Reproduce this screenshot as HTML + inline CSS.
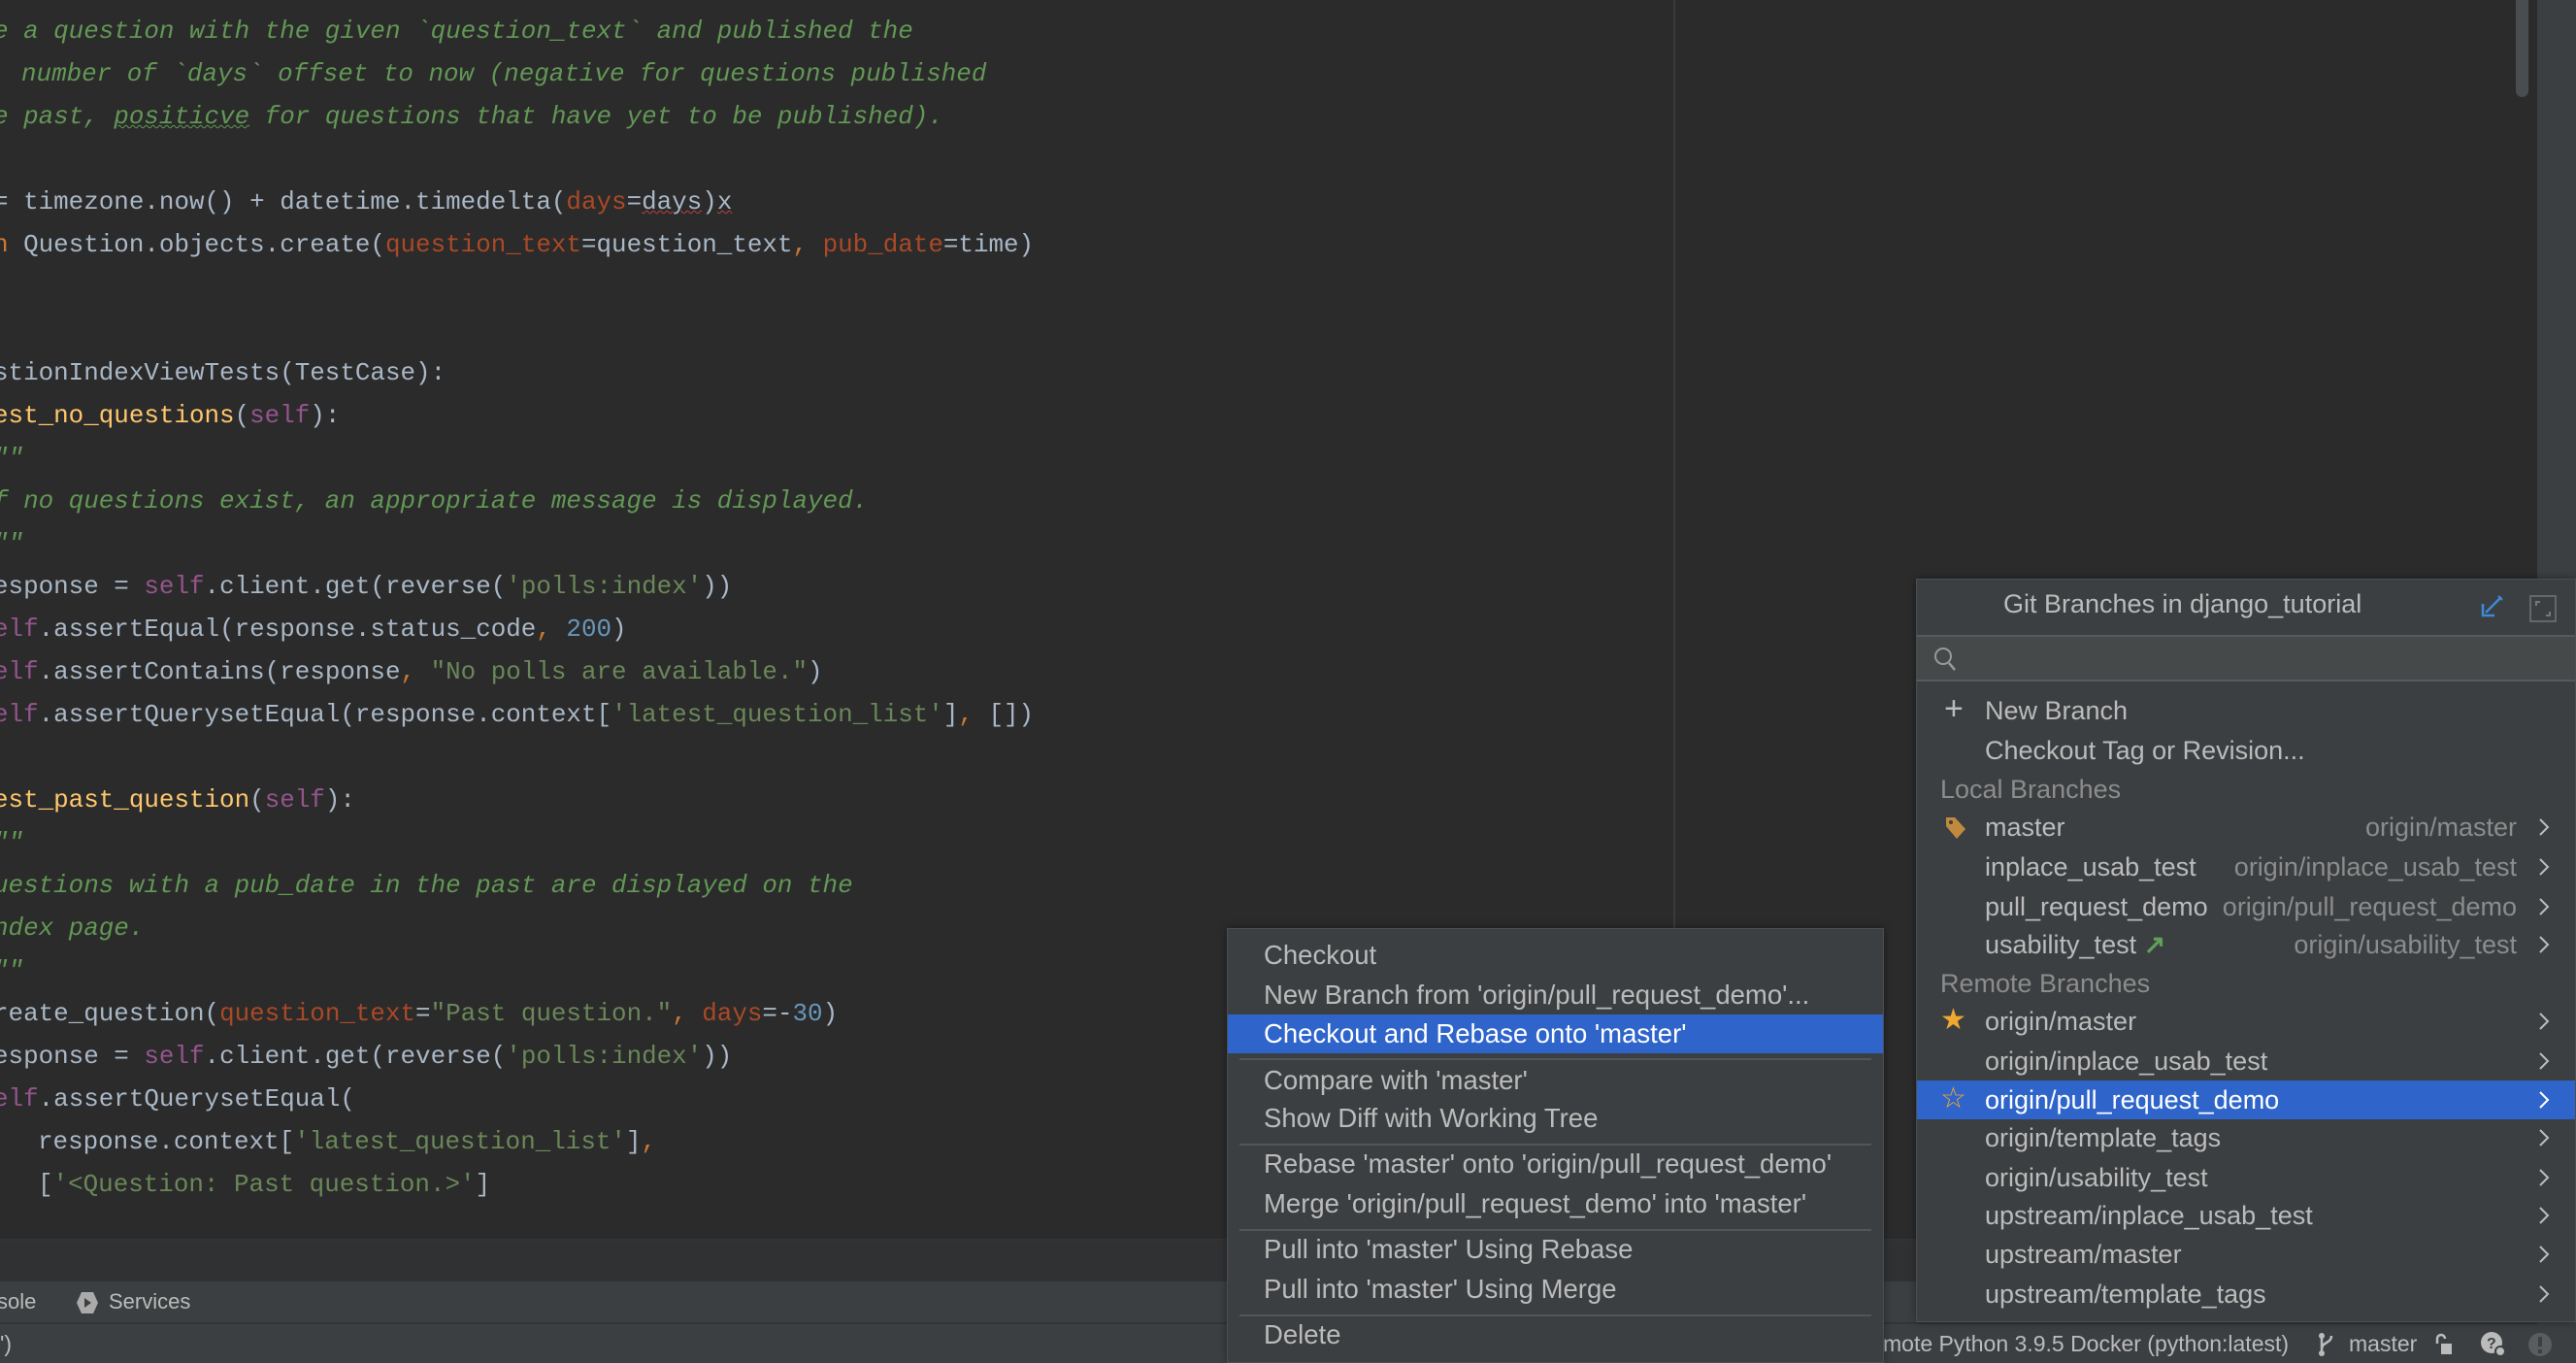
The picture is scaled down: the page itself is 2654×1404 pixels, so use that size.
<!DOCTYPE html>
<html><head><meta charset="utf-8"><style>
*{margin:0;padding:0;box-sizing:border-box}
body{width:2654px;height:1404px;overflow:hidden;background:#2b2b2b;position:relative;font-family:"Liberation Sans",sans-serif}
.c{position:absolute;font-family:"Liberation Mono",monospace;font-size:25.9px;line-height:44px;color:#a9b7c6;white-space:pre}
.cm{color:#629755;font-style:italic}
.k{color:#cc7832}.a{color:#aa4926}.s{color:#94558d}.st{color:#6a8759}.n{color:#6897bb}.f{color:#ffc66d}
.w{text-decoration:underline wavy #629755;text-decoration-thickness:1px}
.wr{text-decoration:underline wavy #bc3f3c;text-decoration-thickness:1px}
.p{position:absolute;background:#3c3f41;color:#bbbbbb;font-size:27.5px}
.r{position:absolute;left:0;right:0;height:40px;line-height:40px;white-space:nowrap}
.g{color:#8c8c8c}
.sep{position:absolute;left:12px;right:12px;height:2px;background:#515658}
.chev{position:absolute;right:26px;top:10px;width:12px;height:20px}
.rt{position:absolute;right:60px;top:0;color:#8c8c8c}
</style></head><body>
<svg width="0" height="0" style="position:absolute"><defs><symbol id="ch" viewBox="0 0 12 20"><path d="M2 2L10 10L2 18" stroke="currentColor" stroke-width="2" fill="none"/></symbol></defs></svg>
<div class="c cm" style="left:-7px;top:10px">e a question with the given `question_text` and published the</div>
<div class="c cm" style="left:22px;top:54px">number of `days` offset to now (negative for questions published</div>
<div class="c cm" style="left:-7px;top:98px">e past, <span class="w">positicve</span> for questions that have yet to be published).</div>
<div class="c" style="left:-7px;top:186px">= timezone.now() + datetime.timedelta(<span class="a">days</span>=<span class="wr">days</span>)<span class="wr">x</span></div>
<div class="c" style="left:-7px;top:230px"><span class="k">n</span> Question.objects.create(<span class="a">question_text</span>=question_text<span class="k">, </span><span class="a">pub_date</span>=time)</div>
<div class="c" style="left:-7px;top:362px">stionIndexViewTests(TestCase):</div>
<div class="c" style="left:-7px;top:406px"><span class="f">est_no_questions</span>(<span class="s">self</span>):</div>
<div class="c cm" style="left:-7px;top:450px">""</div>
<div class="c cm" style="left:-7px;top:494px">f no questions exist, an appropriate message is displayed.</div>
<div class="c cm" style="left:-7px;top:538px">""</div>
<div class="c" style="left:-7px;top:582px">esponse = <span class="s">self</span>.client.get(reverse(<span class="st">'polls:index'</span>))</div>
<div class="c" style="left:-7px;top:626px"><span class="s">elf</span>.assertEqual(response.status_code<span class="k">, </span><span class="n">200</span>)</div>
<div class="c" style="left:-7px;top:670px"><span class="s">elf</span>.assertContains(response<span class="k">, </span><span class="st">"No polls are available."</span>)</div>
<div class="c" style="left:-7px;top:714px"><span class="s">elf</span>.assertQuerysetEqual(response.context[<span class="st">'latest_question_list'</span>]<span class="k">, </span>[])</div>
<div class="c" style="left:-7px;top:802px"><span class="f">est_past_question</span>(<span class="s">self</span>):</div>
<div class="c cm" style="left:-7px;top:846px">""</div>
<div class="c cm" style="left:-7px;top:890px">uestions with a pub_date in the past are displayed on the</div>
<div class="c cm" style="left:-7px;top:934px">ndex page.</div>
<div class="c cm" style="left:-7px;top:978px">""</div>
<div class="c" style="left:-7px;top:1022px">reate_question(<span class="a">question_text</span>=<span class="st">"Past question."</span><span class="k">, </span><span class="a">days</span>=-<span class="n">30</span>)</div>
<div class="c" style="left:-7px;top:1066px">esponse = <span class="s">self</span>.client.get(reverse(<span class="st">'polls:index'</span>))</div>
<div class="c" style="left:-7px;top:1110px"><span class="s">elf</span>.assertQuerysetEqual(</div>
<div class="c" style="left:39px;top:1154px">response.context[<span class="st">'latest_question_list'</span>]<span class="k">,</span></div>
<div class="c" style="left:39px;top:1198px">[<span class="st">'&lt;Question: Past question.&gt;'</span>]</div>

<div style="position:absolute;left:1724px;top:0;width:2px;height:1276px;background:#3b3b3b"></div>
<div style="position:absolute;left:2592px;top:0;width:13px;height:100px;background:#4a4d50;border-radius:0 0 7px 7px"></div>
<div style="position:absolute;left:2614px;top:0;width:40px;height:1404px;background:#3c3f41"></div>

<div style="position:absolute;left:0;top:1276px;width:2614px;height:44px;background:#2f3133;border-top:2px solid #323435"></div>
<div style="position:absolute;left:0;top:1320px;width:2614px;height:42px;background:#3c3f41;font-size:22px;color:#bbb;line-height:42px">
 <span style="position:absolute;left:-3px">sole</span>
 <svg style="position:absolute;left:78px;top:10px" width="24" height="24" viewBox="0 0 24 24"><polygon points="6,1 18,1 23,12 18,23 6,23 1,12" fill="#aaa"/><polygon points="9,7 16,12 9,17" fill="#3c3f41"/></svg>
 <span style="position:absolute;left:112px">Services</span>
</div>
<div style="position:absolute;left:0;top:1362px;width:2614px;height:42px;background:#3c3f41;border-top:2px solid #333;font-size:23px;color:#bbb;line-height:40px">
 <span style="position:absolute;left:0">')</span>
 <span style="position:absolute;left:1940px">mote Python 3.9.5 Docker (python:latest)</span>
 <svg style="position:absolute;left:2388px;top:8px" width="18" height="26" viewBox="0 0 18 26"><circle cx="4" cy="4" r="3" fill="#bbb"/><circle cx="4" cy="22" r="3" fill="#bbb"/><path d="M4 4V22M14 4C14 12 4 10 4 18" stroke="#bbb" stroke-width="2.5" fill="none"/></svg>
 <span style="position:absolute;left:2420px">master</span>
 <svg style="position:absolute;left:2508px;top:9px" width="20" height="24" viewBox="0 0 20 24"><path d="M3 11V6a4 4 0 0 1 8 0" stroke="#bbb" stroke-width="2.5" fill="none"/><rect x="7" y="11" width="11" height="11" fill="#bbb"/></svg>
 <svg style="position:absolute;left:2554px;top:6px" width="30" height="30" viewBox="0 0 30 30"><circle cx="13" cy="13" r="11" fill="#bbb"/><text x="8" y="19" font-size="16" font-family="Liberation Sans" fill="#3c3f41" font-weight="bold">?</text><circle cx="22" cy="22" r="5" fill="#bbb" stroke="#3c3f41" stroke-width="2"/></svg>
 <svg style="position:absolute;left:2604px;top:8px" width="26" height="26" viewBox="0 0 26 26"><circle cx="13" cy="13" r="12" fill="#5a5d5f"/><rect x="11" y="5" width="4" height="10" fill="#3c3f41"/><rect x="11" y="18" width="4" height="4" fill="#3c3f41"/></svg>
</div>

<div class="p" style="left:1264px;top:956px;width:677px;height:448px;border:1px solid #4b4f51;box-shadow:0 0 8px rgba(0,0,0,.4)">
 <div class="r" style="top:7px;padding-left:37px">Checkout</div>
 <div class="r" style="top:48px;padding-left:37px">New Branch from 'origin/pull_request_demo'...</div>
 <div class="r" style="top:88px;padding-left:37px;background:#2f65ca;color:#fff">Checkout and Rebase onto 'master'</div>
 <div class="sep" style="top:133px"></div>
 <div class="r" style="top:136px;padding-left:37px">Compare with 'master'</div>
 <div class="r" style="top:175px;padding-left:37px">Show Diff with Working Tree</div>
 <div class="sep" style="top:221px"></div>
 <div class="r" style="top:222px;padding-left:37px">Rebase 'master' onto 'origin/pull_request_demo'</div>
 <div class="r" style="top:263px;padding-left:37px">Merge 'origin/pull_request_demo' into 'master'</div>
 <div class="sep" style="top:309px"></div>
 <div class="r" style="top:310px;padding-left:37px">Pull into 'master' Using Rebase</div>
 <div class="r" style="top:351px;padding-left:37px">Pull into 'master' Using Merge</div>
 <div class="sep" style="top:397px"></div>
 <div class="r" style="top:398px;padding-left:37px">Delete</div>
</div>

<div class="p" style="left:1974px;top:596px;width:680px;height:766px;border:1px solid #4b4f51;box-shadow:0 0 8px rgba(0,0,0,.4);font-size:27px">
 <div style="position:absolute;left:89px;top:0;height:57px;line-height:50px;white-space:nowrap">Git Branches in django_tutorial</div>
 <svg style="position:absolute;left:580px;top:16px" width="24" height="24" viewBox="0 0 24 24"><path d="M22 2L6 18M3 9V21H15" stroke="#3d8ad8" stroke-width="2.5" fill="none"/><path d="M19 1l4 4" stroke="#3d8ad8" stroke-width="2"/></svg>
 <svg style="position:absolute;left:631px;top:16px" width="28" height="28" viewBox="0 0 28 28"><rect x="1" y="1" width="26" height="26" fill="none" stroke="#666" stroke-width="2"/><path d="M7 11V7H11M21 17V21H17" stroke="#777" stroke-width="2" fill="none"/></svg>
 <div style="position:absolute;left:0;right:0;top:57px;height:48px;background:#45494a;border-top:2px solid #555a5c;border-bottom:2px solid #555a5c"></div>
 <svg style="position:absolute;left:16px;top:68px" width="26" height="28" viewBox="0 0 26 28"><circle cx="11" cy="11" r="8" stroke="#999" stroke-width="2" fill="none"/><path d="M17 18L23 25" stroke="#999" stroke-width="2.5"/></svg>
 <div class="r" style="top:115px;padding-left:70px"><span style="position:absolute;left:28px;font-size:34px;top:-2px">+</span>New Branch</div>
 <div class="r" style="top:156px;padding-left:70px">Checkout Tag or Revision...</div>
 <div class="r g" style="top:196px;padding-left:24px">Local Branches</div>
 <div class="r" style="top:235px;padding-left:70px"><svg style="position:absolute;left:28px;top:8px" width="24" height="26" viewBox="0 0 24 26"><path d="M2 2H11L22 14L13 24L2 11Z" fill="#c08a3e"/><circle cx="7" cy="7" r="2" fill="#3c3f41"/></svg>master<span class="rt">origin/master</span><svg class="chev"><use href="#ch"/></svg></div>
 <div class="r" style="top:276px;padding-left:70px">inplace_usab_test<span class="rt">origin/inplace_usab_test</span><svg class="chev"><use href="#ch"/></svg></div>
 <div class="r" style="top:317px;padding-left:70px">pull_request_demo<span class="rt">origin/pull_request_demo</span><svg class="chev"><use href="#ch"/></svg></div>
 <div class="r" style="top:356px;padding-left:70px">usability_test <span style="color:#5fa05a;font-weight:bold">↗</span><span class="rt">origin/usability_test</span><svg class="chev"><use href="#ch"/></svg></div>
 <div class="r g" style="top:396px;padding-left:24px">Remote Branches</div>
 <div class="r" style="top:435px;padding-left:70px"><span style="position:absolute;left:24px;color:#f0a732;font-size:30px;top:-1px">★</span>origin/master<svg class="chev"><use href="#ch"/></svg></div>
 <div class="r" style="top:476px;padding-left:70px">origin/inplace_usab_test<svg class="chev"><use href="#ch"/></svg></div>
 <div class="r" style="top:516px;padding-left:70px;background:#2f65ca;color:#fff"><span style="position:absolute;left:24px;color:#f0a732;font-size:30px;top:-1px">☆</span>origin/pull_request_demo<svg class="chev" style="color:#fff"><use href="#ch"/></svg></div>
 <div class="r" style="top:555px;padding-left:70px">origin/template_tags<svg class="chev"><use href="#ch"/></svg></div>
 <div class="r" style="top:596px;padding-left:70px">origin/usability_test<svg class="chev"><use href="#ch"/></svg></div>
 <div class="r" style="top:635px;padding-left:70px">upstream/inplace_usab_test<svg class="chev"><use href="#ch"/></svg></div>
 <div class="r" style="top:675px;padding-left:70px">upstream/master<svg class="chev"><use href="#ch"/></svg></div>
 <div class="r" style="top:716px;padding-left:70px">upstream/template_tags<svg class="chev"><use href="#ch"/></svg></div>
</div>
</body></html>
